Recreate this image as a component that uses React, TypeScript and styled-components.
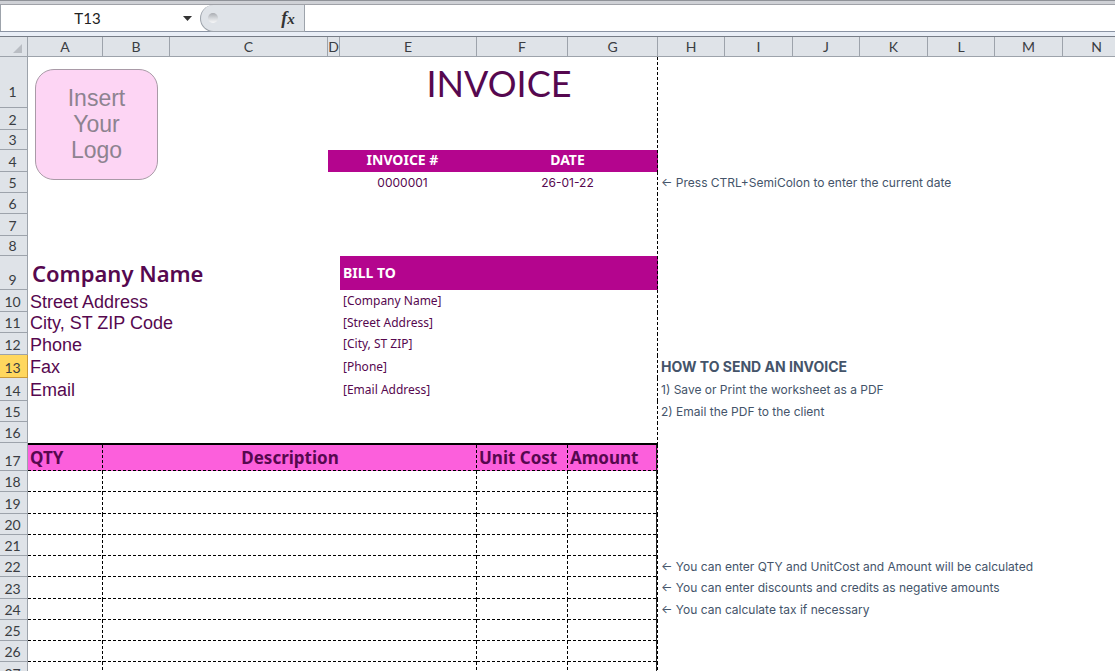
import React from "react";
import styled, { createGlobalStyle, css } from "styled-components";

const Global = createGlobalStyle`
  *, *::before, *::after { box-sizing: border-box; }
  html, body { margin: 0; padding: 0; background: #fff; }
  body { overflow: hidden; }
`;

const calibri = `Lato, Carlito, "Noto Sans", sans-serif`;
const humanist = `"Noto Sans", "Open Sans", sans-serif`;
const arial = `"Liberation Sans", Arial, sans-serif`;
const note = `Inter, Roboto, sans-serif`;

const plum = "#56084f";
const magenta = "#b4058e";
const pink = "#fc5fdc";
const chrome = "#dfe3e8";
const rule = "#9da3ab";
const slate = "#44546a";

const Workbook = styled.div`
  display: flex;
  flex-direction: column;
  height: 100vh;
  overflow: hidden;
  background: #fff;
`;

const FormulaBar = styled.header`
  display: flex;
  flex: none;
  height: 37px;
  padding: 5px 0;
  background: linear-gradient(#8f9298 0 1px, #cfd1d6 1px 4px, #a0a2a8 4px 5px, #fff 5px 31px, #8a93a3 31px 32px, #e9eef6 32px 36px, #767c86 36px);
`;

const NameBox = styled.div`
  display: flex;
  align-items: center;
  width: 200px;
  margin-bottom: 1px;
  border-left: 1px solid ${rule};
  background: #fff;
`;

const NameInput = styled.input`
  flex: 1;
  min-width: 0;
  height: 26px;
  padding: 0;
  border: 0;
  outline: 0;
  background: transparent;
  font: 15px ${calibri};
  color: #222;
  text-align: center;
`;

const DropButton = styled.button`
  display: flex;
  align-items: center;
  justify-content: center;
  width: 26px;
  height: 26px;
  padding: 0;
  border: 0;
  background: transparent;
`;

const FunctionArea = styled.div`
  display: flex;
  align-items: center;
  justify-content: space-between;
  width: 105px;
  padding: 0 6px 0 7px;
  border: 1px solid ${rule};
  border-top: 0;
  border-radius: 14px 0 0 14px;
  background: ${chrome};
`;

const Grip = styled.span`
  width: 10px;
  height: 10px;
  border-radius: 50%;
  background: linear-gradient(#a9acb1, #d3d6da 50%, #f8f8f9);
`;

const FxButton = styled.button`
  width: 20px;
  height: 24px;
  padding: 0;
  border: 0;
  background: transparent;
  font: italic bold 18px/22px "Liberation Serif", serif;
  color: #333;
  white-space: nowrap;
`;

const FxSmall = styled.span`
  font-size: 15px;
`;

const FormulaInput = styled.input`
  flex: 1;
  min-width: 0;
  padding: 0 6px;
  border: 0;
  outline: 0;
  background: transparent;
  font: 15px ${calibri};
`;

const Sheet = styled.main`
  position: relative;
  flex: 1;
  min-height: 0;
  overflow: hidden;
`;

const Grid = styled.table`
  width: 100%;
  min-width: 1131px;
  table-layout: fixed;
  border-collapse: separate;
  border-spacing: 0;
`;

const Col = styled.col<{ $w?: number }>`
  ${(p) => p.$w && `width: ${p.$w}px;`}
`;

const ColHead = styled.th`
  height: 20px;
  padding: 0;
  border-right: 1px solid ${rule};
  border-bottom: 1px solid ${rule};
  background: ${chrome};
  font: 14px/18px ${calibri};
  color: #3a3d42;
`;

const Corner = styled(ColHead)`
  padding: 0 5px 3px 0;
  line-height: 0;
  text-align: right;
  vertical-align: bottom;
`;

const RowHead = styled.th<{ $active?: boolean; $tall?: boolean }>`
  padding: 0 2px ${(p) => (p.$tall ? "6px" : "0")} 0;
  border-right: 1px solid ${rule};
  border-bottom: 1px solid ${rule};
  background: ${chrome};
  font: 14px/18px ${calibri};
  color: #3a3d42;
  vertical-align: bottom;
  ${(p) =>
    p.$active &&
    css`
      border-color: #c9993a;
      background: #ffd75e;
    `}
`;

const Row = styled.tr<{ $h: number }>`
  height: ${(p) => p.$h}px;
`;

const dashX = "repeating-linear-gradient(90deg, #000 0 3px, transparent 3px 5px)";
const dashY = "repeating-linear-gradient(180deg, #000 0 3px, transparent 3px 5px)";
const edgeLine = "linear-gradient(#222, #222) right 1px top / 1px 100% no-repeat";

const Cell = styled.td<{ $edge?: boolean }>`
  padding: 0;
  white-space: nowrap;
  vertical-align: middle;
  ${(p) => p.$edge && `background: ${dashY} right / 1px 100% no-repeat;`}
`;

const ItemCell = styled.td<{ $last?: boolean }>`
  padding: 0;
  background: ${(p) => (p.$last ? `${edgeLine}, ` : "")}${dashY} right / 1px 100% no-repeat, ${dashX} bottom / 100% 1px no-repeat;
`;

const ItemHead = styled.td<{ $center?: boolean; $last?: boolean }>`
  padding: 0 2px;
  border-top: 2px solid #000;
  background: ${(p) => (p.$last ? `${edgeLine}, ` : "")}${dashY} right / 1px 100% no-repeat, ${dashX} bottom / 100% 1px no-repeat, ${pink};
  font: bold 17px/24px ${humanist};
  color: ${plum};
  text-align: ${(p) => (p.$center ? "center" : "left")};
  white-space: nowrap;
`;

const Title = styled.h1`
  margin: 0;
  font: 36px/44px ${calibri};
  color: ${plum};
  text-align: center;
`;

const TitleCell = styled(Cell)`
  padding: 0 0 0;
`;

const BandCell = styled(Cell)`
  padding: 0 0 2px;
  background: ${(p) => (p.$edge ? `${dashY} right / 1px 100% no-repeat, ` : "")}${magenta};
  font: bold 14px/18px ${humanist};
  color: #fff;
  text-align: center;
`;

const BillCell = styled(BandCell)`
  padding: 0 3px;
  text-align: left;
`;

const ValueCell = styled(Cell)`
  font: 12px/18px ${note};
  color: ${plum};
  text-align: center;
`;

const CompanyCell = styled(Cell)`
  padding: 0 4px;
  font: 600 22px/28px ${humanist};
  color: ${plum};
`;

const AddressCell = styled(Cell)`
  padding: 1px 2px 0;
  font: 18px/20px ${arial};
  color: ${plum};
`;

const ClientCell = styled(Cell)`
  padding: 0 3px;
  font: 12px/18px ${humanist};
  color: ${plum};
`;

const NoteCell = styled(Cell)<{ $strong?: boolean }>`
  padding: 0 3px;
  font: ${(p) => (p.$strong ? "bold 14px" : "12px")}/18px ${note};
  color: ${slate};
`;

const LogoButton = styled.button`
  position: absolute;
  top: 32px;
  left: 35px;
  width: 123px;
  height: 111px;
  padding: 0 20px 2px;
  border: 1px solid #a99aa7;
  border-radius: 19px;
  background: #fdd5f4;
  font: 23px/26px ${arial};
  color: #8d8390;
`;

const columns = [28, 75, 67, 158, 12, 137, 91, 90, 67, 68, 67, 68, 67, 68];
const letters = "ABCDEFGHIJKLMN".split("");
const heights = [51, 22, 20, 22, 21, 21, 22, 20, 34, 22, 21, 22, 23, 23, 21, 21, 28, 21, 22, 21, 21, 21, 22, 21, 21, 21, 22];

const address: Record<number, string> = {
  10: "Street Address",
  11: "City, ST ZIP Code",
  12: "Phone",
  13: "Fax",
  14: "Email",
};

const client: Record<number, string> = {
  10: "[Company Name]",
  11: "[Street Address]",
  12: "[City, ST ZIP]",
  13: "[Phone]",
  14: "[Email Address]",
};

const notes: Record<number, string> = {
  5: "← Press CTRL+SemiColon to enter the current date",
  13: "HOW TO SEND AN INVOICE",
  14: "1) Save or Print the worksheet as a PDF",
  15: "2) Email the PDF to the client",
  22: "← You can enter QTY and UnitCost and Amount will be calculated",
  23: "← You can enter discounts and credits as negative amounts",
  24: "← You can calculate tax if necessary",
};

function InvoiceCells({ n }: { n: number }) {
  if (n === 1)
    return (
      <>
        <Cell colSpan={4} />
        <TitleCell colSpan={3} $edge>
          <Title>INVOICE</Title>
        </TitleCell>
      </>
    );
  if (n === 4)
    return (
      <>
        <Cell colSpan={3} />
        <BandCell colSpan={2}>INVOICE #</BandCell>
        <BandCell colSpan={2} $edge>DATE</BandCell>
      </>
    );
  if (n === 5)
    return (
      <>
        <Cell colSpan={3} />
        <ValueCell colSpan={2}>0000001</ValueCell>
        <ValueCell colSpan={2} $edge>26-01-22</ValueCell>
      </>
    );
  if (n === 9)
    return (
      <>
        <CompanyCell colSpan={4}>Company Name</CompanyCell>
        <BillCell colSpan={3} $edge>BILL TO</BillCell>
      </>
    );
  if (address[n])
    return (
      <>
        <AddressCell colSpan={4}>{address[n]}</AddressCell>
        <ClientCell colSpan={3} $edge>{client[n]}</ClientCell>
      </>
    );
  if (n === 17)
    return (
      <>
        <ItemHead>QTY</ItemHead>
        <ItemHead colSpan={4} $center>Description</ItemHead>
        <ItemHead>Unit Cost</ItemHead>
        <ItemHead $last>Amount</ItemHead>
      </>
    );
  if (n > 17)
    return (
      <>
        <ItemCell />
        <ItemCell colSpan={4} />
        <ItemCell />
        <ItemCell $last />
      </>
    );
  return <Cell colSpan={7} $edge />;
}

export default function App() {
  return (
    <>
      <Global />
      <Workbook>
        <FormulaBar>
          <NameBox>
            <NameInput aria-label="Name box" defaultValue="T13" />
            <DropButton aria-label="Show names">
              <svg width="9" height="5" viewBox="0 0 9 5" aria-hidden="true">
                <path d="M0 0h9L4.500 5z" fill="#333" />
              </svg>
            </DropButton>
          </NameBox>
          <FunctionArea>
            <Grip />
            <FxButton aria-label="Insert function">
              f<FxSmall>x</FxSmall>
            </FxButton>
          </FunctionArea>
          <FormulaInput aria-label="Formula" />
        </FormulaBar>
        <Sheet>
          <Grid>
            <colgroup>
              {columns.map((w, i) => (
                <Col key={i} $w={w} />
              ))}
              <Col />
            </colgroup>
            <thead>
              <tr>
                <Corner aria-label="Select all">
                  <svg width="9" height="9" viewBox="0 0 9 9" aria-hidden="true">
                    <path d="M9 0v9H0z" fill="#b9bdc3" />
                  </svg>
                </Corner>
                {letters.map((l) => (
                  <ColHead key={l} scope="col">{l}</ColHead>
                ))}
              </tr>
            </thead>
            <tbody>
              {heights.map((h, i) => {
                const n = i + 1;
                return (
                  <Row key={n} $h={h}>
                    <RowHead scope="row" $active={n === 13} $tall={n === 1}>{n}</RowHead>
                    <InvoiceCells n={n} />
                    <NoteCell colSpan={7} $strong={n === 13}>{notes[n]}</NoteCell>
                  </Row>
                );
              })}
            </tbody>
          </Grid>
          <LogoButton>Insert Your Logo</LogoButton>
        </Sheet>
      </Workbook>
    </>
  );
}
